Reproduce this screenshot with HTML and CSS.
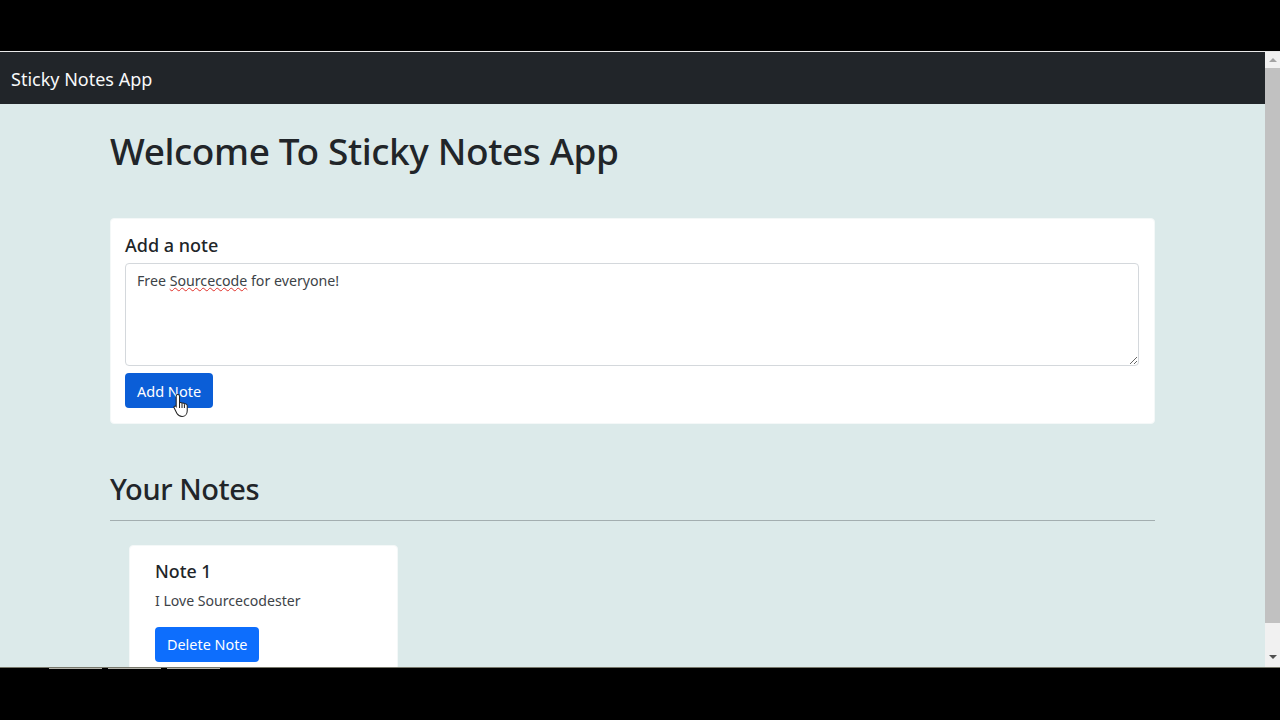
FILE: index.html
```html
<!DOCTYPE html>
<html lang="en">
<head>
    <meta charset="UTF-8">
    <title>Sticky Notes App</title>
    <link rel="stylesheet" href="styles.css">
</head>
<body>
    <div class="top-band"></div>

    <div class="viewport">
        <div class="page">
            <nav class="navbar">
                <a href="#" class="brand">Sticky Notes App</a>
            </nav>

            <main class="container">
                <h1>Welcome To Sticky Notes App</h1>

                <div class="card add-card">
                    <h5>Add a note</h5>
                    <div class="note-input">Free <span class="misspelled">Sourcecode</span> for everyone!</div>
                    <div class="add-row">
                        <button type="button" class="btn btn-hover">Add Note</button>
                        <!-- mouse pointer from the recording -->
                        <svg class="pointer" width="17" height="25" viewBox="0 0 16 24">
                            <path d="M4.500 1.500c1 0 1.600.7 1.600 1.700v6.200c.9-.5 1.900-.3 2.400.4.900-.4 1.800-.2 2.300.6 1.200-.3 2.700.4 2.700 2v4.600c0 3-1.900 5.500-5 5.500-2.500 0-3.800-1-5-3L.9 14.200c-.6-1 .8-2.200 1.800-1.300l.2.2V3.200c0-1 .6-1.700 1.600-1.700z" fill="#fff" stroke="#222" stroke-width="1"/>
                            <path d="M6.100 9.500v5M8.500 10v4.500M10.800 10.800v3.700" fill="none" stroke="#222" stroke-width="1"/>
                        </svg>
                    </div>
                </div>

                <h2>Your Notes</h2>
                <hr>

                <div class="notes">
                    <div class="card note-card">
                        <h5>Note 1</h5>
                        <p>I Love Sourcecodester</p>
                        <button type="button" class="btn">Delete Note</button>
                    </div>
                </div>
            </main>
        </div>

        <div class="scrollbar">
            <span class="arrow arrow-up"></span>
            <div class="thumb"></div>
            <span class="arrow arrow-down"></span>
        </div>
    </div>

    <div class="bottom-band">
        <span class="tab-edge"></span>
        <span class="tab-edge"></span>
        <span class="tab-edge"></span>
    </div>
</body>
</html>
```

FILE: styles.css
```css
* {
    box-sizing: border-box;
}
body {
    margin: 0;
    height: 720px;
    overflow: hidden;
    display: flex;
    flex-direction: column;
    background-color: #000;
    font-family: "Noto Sans", "Open Sans", Arial, sans-serif;
    font-size: 15px;
    color: #212529;
}
.top-band {
    height: 52px;
    border-bottom: 1px solid #e8e8e8;
}
.viewport {
    height: 615px;
    display: flex;
}
.page {
    flex: 1;
    overflow: hidden;
    background-color: #dceaea;
}
.navbar {
    height: 52px;
    display: flex;
    align-items: center;
    padding: 2px 11px 0;
    background-color: #212529;
}
.brand {
    color: #f8f9fa;
    font-size: 18px;
    text-decoration: none;
}
.container {
    padding: 0 110px;
}
h1 {
    margin: 0;
    padding-top: 20px;
    height: 114px;
    font-size: 37px;
    letter-spacing: -0.4px;
    line-height: 54px;
    font-weight: 500;
}
h2 {
    margin: 44px 0 0;
    font-size: 29px;
    letter-spacing: -0.4px;
    line-height: 42px;
    font-weight: 500;
}
h5 {
    margin: 0;
    font-size: 18px;
    line-height: 24px;
    font-weight: 500;
}
hr {
    margin: 10px 0 0;
    border: none;
    border-top: 1px solid #a3aeb0;
}
.card {
    background-color: #fff;
    border: 1px solid #f4f8f8;
    border-radius: 4px;
}
.add-card {
    height: 206px;
    padding: 14px 15px 14px 14px;
}
.note-input {
    height: 103px;
    margin-top: 6px;
    padding: 6px 11px;
    line-height: 22px;
    font-size: 14.2px;
    color: #3d4348;
    background-color: #fff;
    border: 1px solid #d4d8dc;
    border-radius: 4px;
    overflow: auto;
    resize: vertical;
}
.misspelled {
    text-decoration: underline wavy #e0302a 1px;
}
.add-row {
    position: relative;
    margin-top: 7px;
}
.btn {
    height: 35px;
    padding: 0 12px;
    font-family: inherit;
    font-size: 14.5px;
    color: #fff;
    background-color: #0d6efd;
    border: none;
    border-radius: 4px;
}
.btn-hover {
    background-color: #0b5ed7;
}
.pointer {
    position: absolute;
    left: 48px;
    top: 20px;
}
.notes {
    padding: 24px 19px 0;
}
.note-card {
    width: 269px;
    height: 160px;
    padding: 13px 25px;
}
.note-card h5 {
    font-size: 17.8px;
}
.note-card p {
    margin: 6px 0 14px;
    font-size: 14.1px;
    line-height: 24px;
    color: #3d4348;
}
.note-card .btn {
    font-size: 14.4px;
}
.scrollbar {
    width: 15px;
    display: flex;
    flex-direction: column;
    align-items: center;
    background-color: #f1f1f1;
}
.thumb {
    width: 100%;
    height: 555px;
    margin: 6px 0 0;
    background-color: #c1c1c1;
}
.arrow {
    width: 0;
    height: 0;
    border-left: 4px solid transparent;
    border-right: 4px solid transparent;
}
.arrow-up {
    margin-top: 6px;
    border-bottom: 4px solid #a3a3a3;
}
.arrow-down {
    margin-top: 32px;
    border-top: 4px solid #505050;
}
.bottom-band {
    height: 53px;
    display: flex;
    gap: 6px;
    padding-left: 49px;
    border-top: 1px solid #77776a;
}
.tab-edge {
    width: 53px;
    height: 1px;
    background-color: #b5b5ae;
}
```
